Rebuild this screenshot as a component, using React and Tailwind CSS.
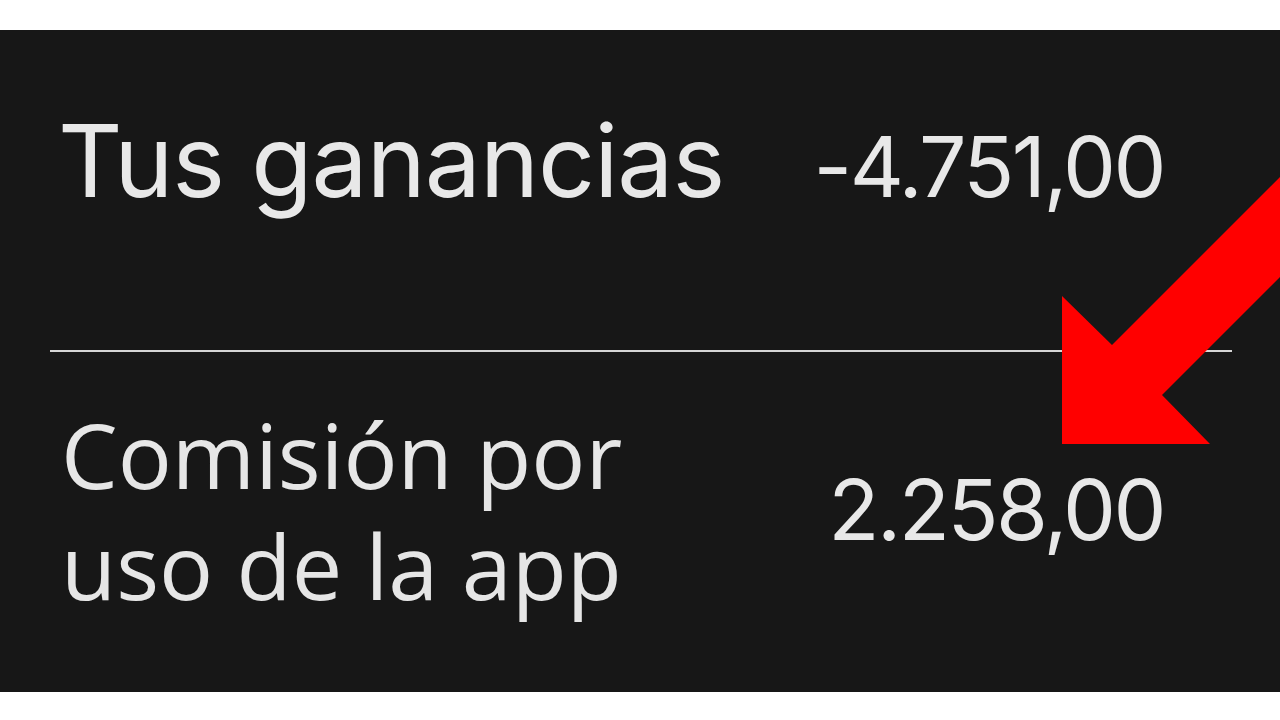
import React from 'react';

// Red pointer arrow laid over the right side of the panel
const PointerArrow = () => (
  <svg
    className="absolute left-0 top-0 pointer-events-none"
    width="1280"
    height="720"
    viewBox="0 0 1280 720"
  >
    <polygon
      points="1062,296 1112,345 1280,177 1280,277 1162,395 1210,444 1062,444"
      fill="#ff0000"
    />
  </svg>
);

const App = () => {
  return (
    <div className="relative w-[1280px] h-[720px] bg-white overflow-hidden">
      <div className="mt-[30px] h-[662px] bg-[#171717] flex flex-col">
        {/* Ganancias */}
        <div className="h-[320px] pl-[58px] pr-[116px] pt-[81px] flex items-baseline justify-between">
          <span className="font-['Inter',sans-serif] text-[100px] leading-none text-[#e8e8e8] tracking-[-0.01em]">
            Tus ganancias
          </span>
          <span className="font-['Inter',sans-serif] text-[84px] leading-none text-[#e8e8e8] tracking-[-0.03em]">
            -4.751,00
          </span>
        </div>

        <div className="ml-[50px] w-[1182px] h-[2px] bg-[#d6d6d6]" />

        {/* Comisión */}
        <div className="pl-[61px] pr-[116px] pt-[47px] flex items-center justify-between">
          <div className="font-['Open_Sans',sans-serif] text-[90px] leading-[111px] text-[#e6e6e6]">
            <div>Comisión por</div>
            <div>uso de la app</div>
          </div>
          <span className="font-['Inter',sans-serif] text-[84px] leading-none text-[#e8e8e8] tracking-[-0.03em]">
            2.258,00
          </span>
        </div>
      </div>

      <PointerArrow />
    </div>
  );
};

export default App;
